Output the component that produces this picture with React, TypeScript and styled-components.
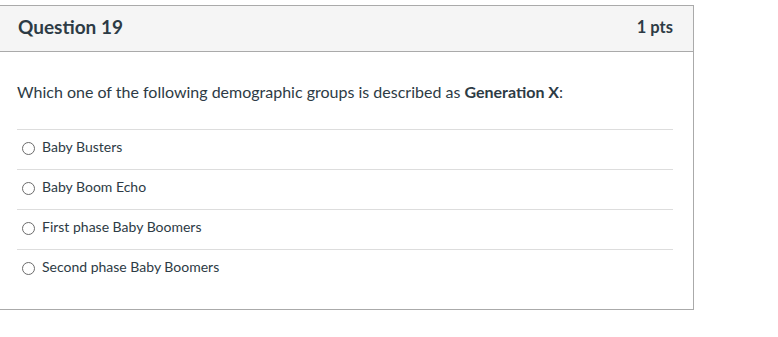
import styled, { createGlobalStyle } from "styled-components"

const options = [
  "Baby Busters",
  "Baby Boom Echo",
  "First phase Baby Boomers",
  "Second phase Baby Boomers",
]

export default function App() {
  return (
    <>
      <GlobalStyle />
      <Card>
        <Header>
          <Title>Question 19</Title>
          <Points>1 pts</Points>
        </Header>

        <Body>
          <QuestionText>
            Which one of the following demographic groups is described as{" "}
            <strong>Generation X</strong>:
          </QuestionText>

          <AnswerList>
            {options.map(option => (
              <Answer key={option}>
                <Radio type="radio" name="q19" />
                <AnswerLabel>{option}</AnswerLabel>
              </Answer>
            ))}
          </AnswerList>
        </Body>
      </Card>
    </>
  )
}

const GlobalStyle = createGlobalStyle`
  body {
    margin: 0;
    background: #ffffff;
    font-family: Lato, "Open Sans", sans-serif;
    color: #2d3b45;
  }
`

const Card = styled.div`
  margin: 5px 0 0 -1px;
  width: 695px;
  box-sizing: border-box;
  border: 1px solid #aaaaaa;
  background: #ffffff;
`

const Header = styled.div`
  height: 46px;
  box-sizing: border-box;
  padding: 0 20px 4px 18px;
  background: #f5f5f5;
  border-bottom: 1px solid #aaaaaa;

  display: flex;
  align-items: center;
  justify-content: space-between;
`

const Title = styled.h2`
  margin: 0;
  font-size: 19px;
  font-weight: 700;
  color: #2d3b45;
`

const Points = styled.span`
  font-size: 16.5px;
  font-weight: 700;
  color: #2d3b45;
`

const Body = styled.div`
  padding: 28px 20px 20px 17px;
`

const QuestionText = styled.p`
  margin: 0 0 25px;
  font-size: 16px;
  line-height: 24px;

  strong {
    font-weight: 700;
  }
`

const AnswerList = styled.div`
  display: flex;
  flex-direction: column;
`

const Answer = styled.label`
  height: 40px;
  box-sizing: border-box;
  border-top: 1px solid #dddddd;
  padding: 0 0 6px 5px;

  display: flex;
  align-items: center;
  gap: 7px;
`

const Radio = styled.input`
  appearance: none;
  margin: 4px 0 0;
  width: 13px;
  height: 13px;
  border-radius: 50%;
  border: 1px solid #6b6b6b;
  background: #ffffff;
`

const AnswerLabel = styled.span`
  font-size: 14px;
  color: #2d3b45;
`
